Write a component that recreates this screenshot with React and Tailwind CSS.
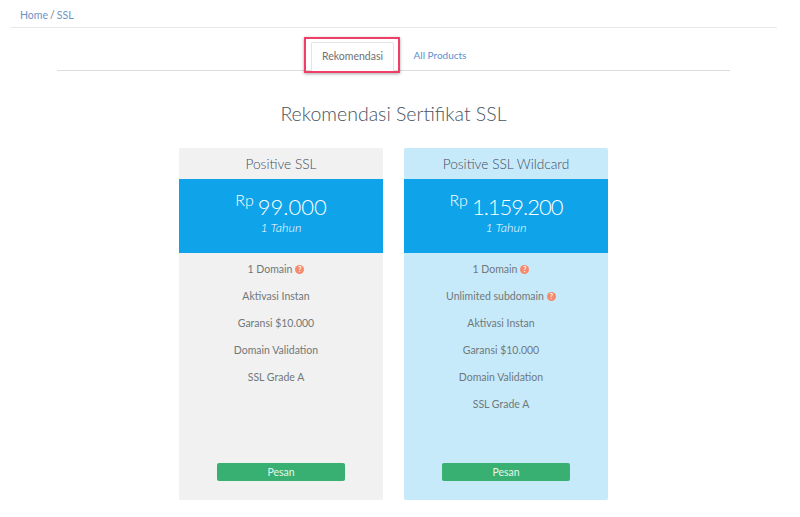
const plans = [
  {
    name: "Positive SSL",
    price: "99.000",
    priceClass: "",
    bg: "bg-[#f1f1f1]",
    features: [
      ["1 Domain", true],
      ["Aktivasi Instan", false],
      ["Garansi $10.000", false],
      ["Domain Validation", false],
      ["SSL Grade A", false],
    ],
  },
  {
    name: "Positive SSL Wildcard",
    price: "1.159.200",
    priceClass: "tracking-[-1px]",
    bg: "bg-[#c7eafa]",
    features: [
      ["1 Domain", true],
      ["Unlimited subdomain", true],
      ["Aktivasi Instan", false],
      ["Garansi $10.000", false],
      ["Domain Validation", false],
      ["SSL Grade A", false],
    ],
  },
];

function Help() {
  return (
    <span className="ml-[3px] inline-flex h-[9px] w-[9px] items-center justify-center rounded-full bg-[#f58a6c] text-[7px] font-bold leading-none text-white">
      ?
    </span>
  );
}

function PlanCard({ plan }) {
  return (
    <div className={`flex h-[352px] w-[204px] flex-col rounded-[2px] ${plan.bg}`}>
      <h3 className="flex h-[31px] items-center justify-center pt-[1px] text-[13.7px] font-light text-[#3f4b5e]">{plan.name}</h3>
      <div className="flex h-[74px] flex-col items-center bg-[#0fa3ea] pt-[12px] text-white">
        <div className="flex items-start leading-none">
          <span className="mr-[4px] text-[16px] font-light leading-[18px]">Rp</span>
          <span className={`mt-[5px] text-[22px] font-light leading-[22px] ${plan.priceClass}`}>{plan.price}</span>
        </div>
        <div className="mt-[2px] text-[12.5px] font-light italic leading-[16px] text-white">1 Tahun</div>
      </div>
      <ul className="flex flex-1 flex-col pr-[10px] pt-[3px] text-[#70787a]">
        {plan.features.map(([label, help]) => (
          <li key={label} className="flex h-[27px] items-center justify-center text-[10.5px]">
            {label}
            {help && <Help />}
          </li>
        ))}
      </ul>
      <button className="mx-auto mb-[19px] h-[18px] w-[128px] rounded-[2px] bg-[#38b072] pt-[1px] text-[10.5px] text-[#e4f6ec]">
        Pesan
      </button>
    </div>
  );
}

export default function App() {
  return (
    <div className="h-[517px] w-[800px] overflow-hidden bg-white font-['Lato','Noto_Sans',sans-serif]">
      <div className="w-[787px]">
        <div className="mx-[10px] flex h-[28px] items-center border-b border-[#e8e8e8] px-[10px] pt-[5px] text-[10.5px] text-[#6a93c7]">
          <span>Home</span>
          <span className="mx-[2px] text-[#777]">/</span>
          <span>SSL</span>
        </div>

        <div className="mx-[57px] mt-[14px] flex h-[29px] justify-center border-b border-[#dddddd] pl-[10px] text-[10.5px]">
          <div className="relative flex h-[29px] w-[83px] items-center justify-center rounded-t-[2px] border border-b-0 border-[#e4e4e4] bg-white text-[#707070]">
            Rekomendasi
            <span className="absolute left-[-8px] top-[-6px] h-[36px] w-[96px] border-[2px] border-[#ef3f68] shadow-[0_1px_3px_rgba(0,0,0,0.35)]" />
          </div>
          <div className="flex w-[92px] items-center justify-center pb-[2px] text-[10px] text-[#5b8fd0]">All Products</div>
        </div>

        <h2 className="mt-[30px] text-center text-[19.5px] font-light leading-[26px] text-[#4a545c]">Rekomendasi Sertifikat SSL</h2>

        <div className="mt-[21px] flex justify-center gap-[21px]">
          {plans.map((plan) => (
            <PlanCard key={plan.name} plan={plan} />
          ))}
        </div>
      </div>
    </div>
  );
}
